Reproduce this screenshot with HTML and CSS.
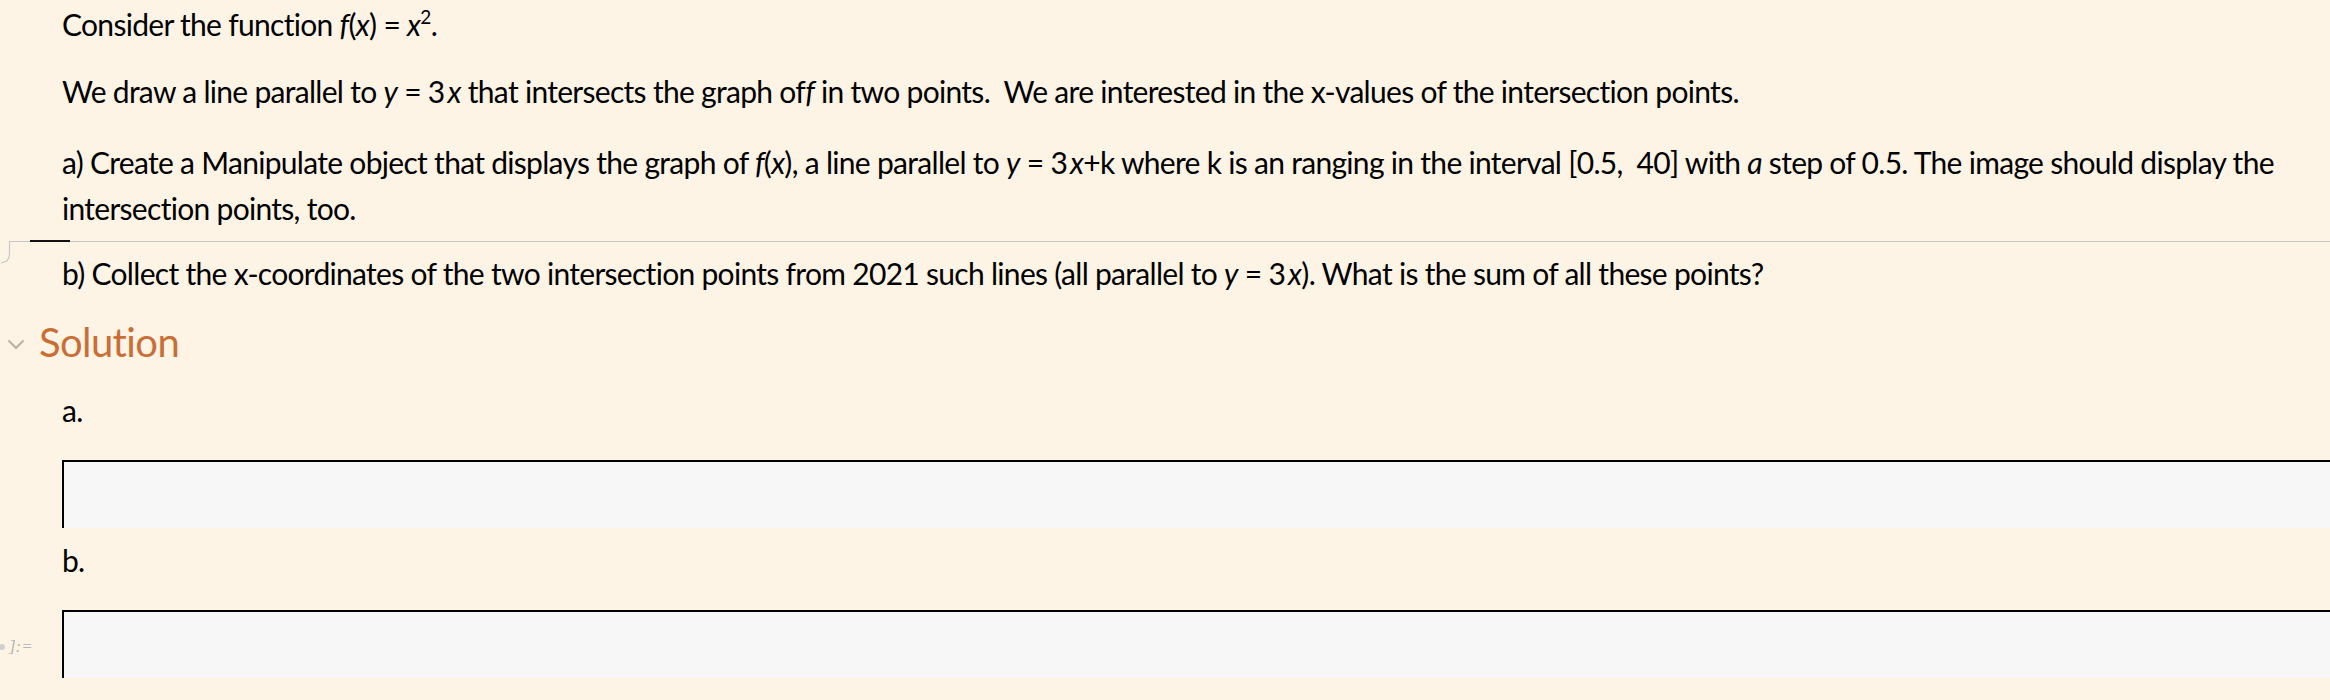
FILE: index.html
```html
<!DOCTYPE html>
<html>
<head>
<meta charset="utf-8">
<link rel="stylesheet" href="styles.css">
</head>
<body>
<div class="nb">
  <p class="txt t1">Consider the function <i>f</i><span class="m">(</span><i>x</i><span class="m">)</span> <span class="eq">=</span> <i>x</i><sup>2</sup>.</p>
  <p class="txt t2">We draw a line parallel to <i>y</i> <span class="eq">=</span> 3<span class="th"></span><i>x</i> that intersects the graph of<i>f</i> in two points.&nbsp; We are interested in the x-values of the intersection points.</p>
  <p class="txt t3">a) Create a Manipulate object that displays the graph of <i>f</i>(<i>x</i>), a line parallel to <i>y</i> <span class="eq">=</span> 3<span class="th"></span><i>x</i>+k where k is an ranging in the interval [0.5,&nbsp; 40] with <i>a</i> step of 0.5. The image should display the<br>intersection points, too.</p>
  <div class="sep">
    <svg class="bracket" width="12" height="24" viewBox="0 0 12 24"><path d="M9.5 0 V13 Q9.5 21 1 22" fill="none" stroke="#c8c8c8" stroke-width="1.2"/></svg>
    <span class="cursor"></span>
  </div>
  <p class="txt t4">b) Collect the x-coordinates of the two intersection points from 2021 such lines (all parallel to <i>y</i> <span class="eq">=</span> 3<span class="th"></span><i>x</i>). What is the sum of all these points?</p>

  <div class="section">
    <svg class="chev" width="18" height="12" viewBox="0 0 18 12"><polyline points="1.5,1.5 9,9 16.5,1.5" fill="none" stroke="#bab2a6" stroke-width="2.2"/></svg>
    <h2 class="title">Solution</h2>
  </div>

  <p class="txt lbl la">a.</p>
  <div class="inrow r1">
    <span class="inlabel"></span>
    <div class="inbox"></div>
  </div>
  <p class="txt lbl lb">b.</p>
  <div class="inrow r2">
    <span class="inlabel"><span class="dot"></span>]:=</span>
    <div class="inbox"></div>
  </div>
</div>
</body>
</html>
```

FILE: styles.css
```css
html, body {
  margin: 0;
  padding: 0;
  background: #fef4e6;
  height: 700px;
  overflow: hidden;
}

.nb {
  font-family: "Lato", "Noto Sans", sans-serif;
  color: #000;
  position: relative;
}

.txt {
  margin: 0;
  padding-left: 62px;
  font-size: 30px;
  line-height: 46px;
  letter-spacing: -0.7px;
  white-space: nowrap;
}

.txt i {
  font-style: italic;
}

.eq {
  display: inline-block;
}

.th {
  display: inline-block;
  width: 3px;
}

sup {
  font-size: 19px;
  line-height: 0;
  vertical-align: 12px;
}

.t1 { padding-top: 1px; }
.t2 { margin-top: 21px; }
.t3 { margin-top: 25px; }

.sep {
  position: relative;
  height: 1px;
  margin-top: 10px;
  margin-left: 9px;
  background: #c6c6c6;
}

.bracket {
  position: absolute;
  left: -9px;
  top: 0;
}

.cursor {
  position: absolute;
  left: 21px;
  top: -1px;
  width: 40px;
  height: 2px;
  background: #111;
}

.t4 { margin-top: 8px; }

.section {
  display: flex;
  align-items: center;
  margin-top: 21px;
  height: 50px;
}

.chev {
  margin-left: 7px;
  margin-top: 6px;
}

.title {
  margin: 0 0 0 14px;
  font-weight: normal;
  font-size: 40px;
  line-height: 50px;
  letter-spacing: -0.6px;
  color: #c96f36;
}

.la { margin-top: 20px; }

.inrow {
  display: flex;
  align-items: stretch;
  height: 68px;
}

.r1 { margin-top: 27px; }
.lb { margin-top: 9px; }
.r2 { margin-top: 27px; }

.inlabel {
  width: 62px;
  flex: none;
  display: flex;
  align-items: center;
  padding-top: 6px;
  box-sizing: border-box;
  font-family: "Liberation Serif", serif;
  font-style: italic;
  font-size: 17px;
  color: #b4b4b4;
}

.dot {
  display: inline-block;
  width: 6px;
  height: 6px;
  border-radius: 50%;
  background: #d0d0d0;
  margin-left: -1px;
  margin-right: 4px;
}

.inbox {
  flex: 1;
  background: #f7f7f7;
  border-top: 2px solid #000;
  border-left: 2px solid #000;
}
```
